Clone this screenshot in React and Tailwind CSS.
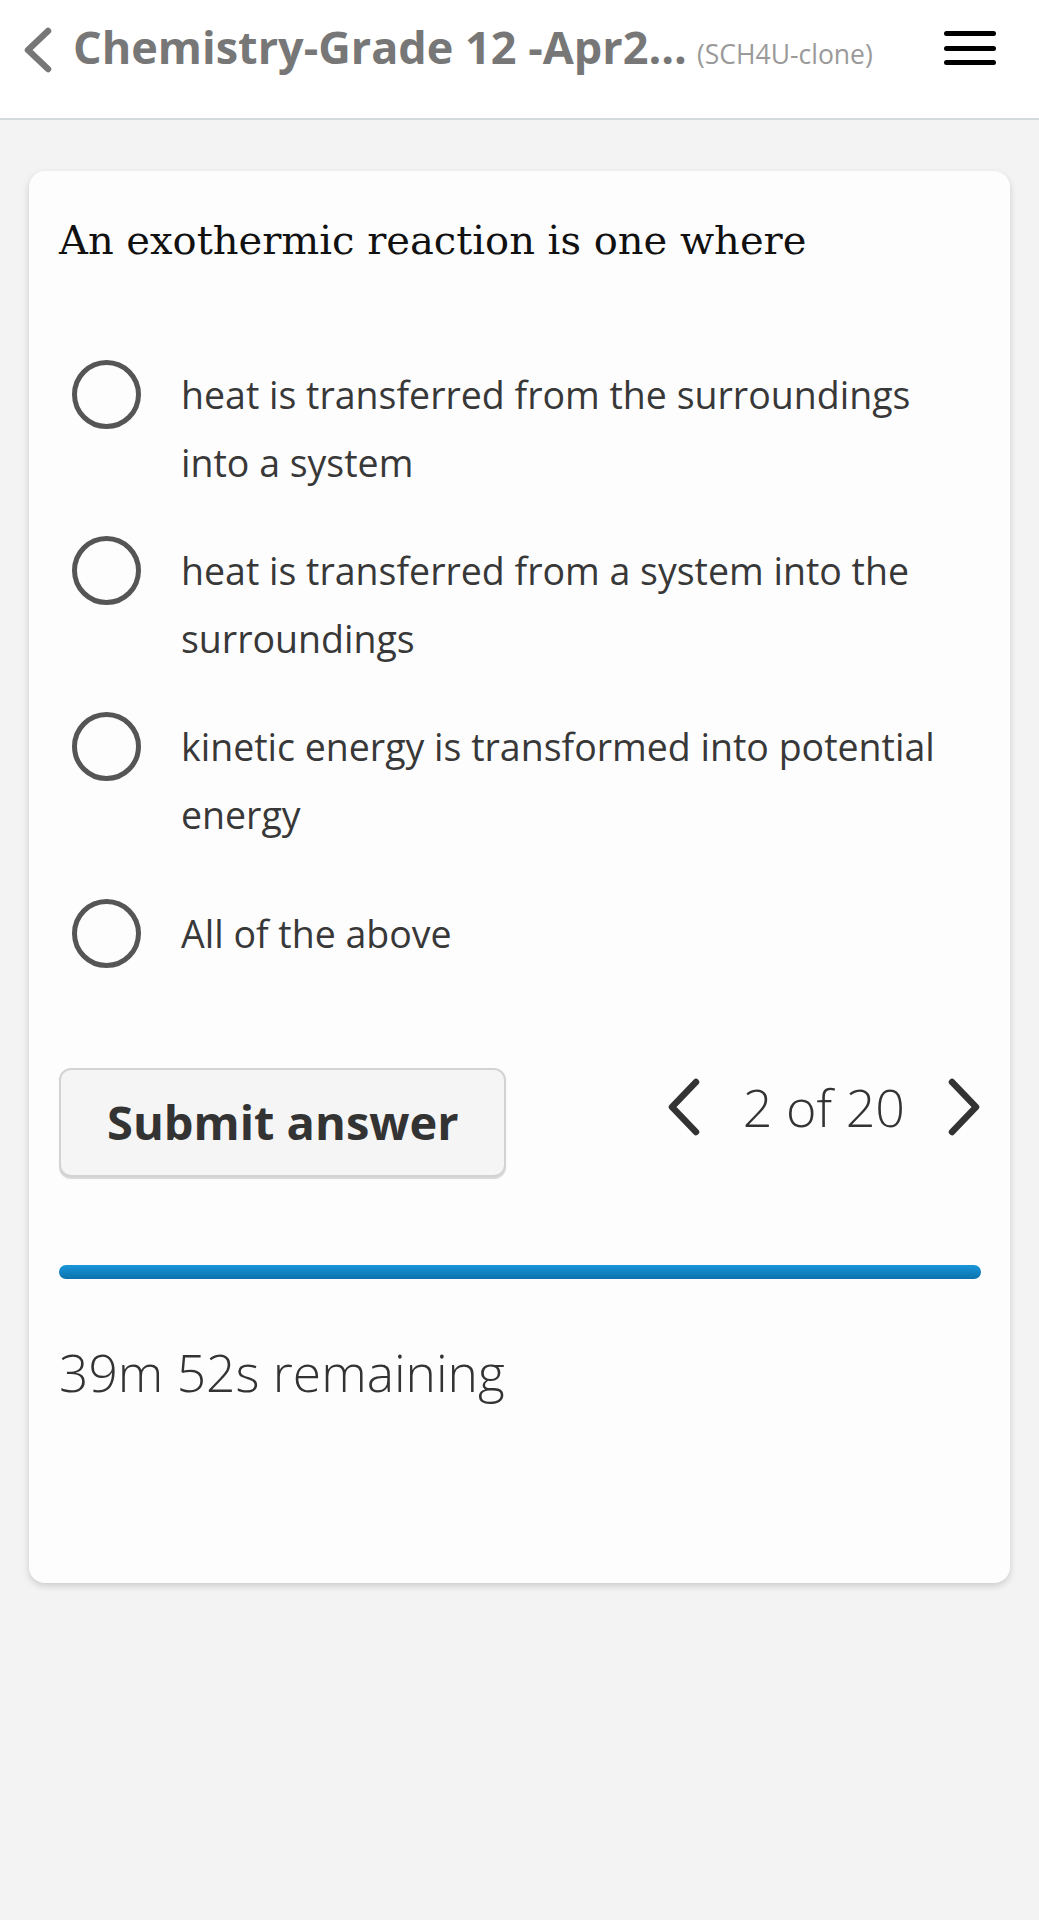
import React from 'react';

const options = [
  'heat is transferred from the surroundings into a system',
  'heat is transferred from a system into the surroundings',
  'kinetic energy is transformed into potential energy',
  'All of the above',
];

function Chevron({ dir = 'left', className = '', color = '#333' }) {
  return (
    <svg viewBox="0 0 34 58" className={className} fill="none">
      {dir === 'left' ? (
        <path d="M29 4 L5 29 L29 54" stroke={color} strokeWidth="6.5" strokeLinecap="round" strokeLinejoin="round" />
      ) : (
        <path d="M5 4 L29 29 L5 54" stroke={color} strokeWidth="6.5" strokeLinecap="round" strokeLinejoin="round" />
      )}
    </svg>
  );
}

export default function App() {
  return (
    <div className="min-h-[1920px] bg-[#f3f3f3]" style={{ fontFamily: '"Open Sans", "Noto Sans", sans-serif' }}>
      <header className="h-[120px] bg-white border-b-[2px] border-[#d5dadc] flex items-start justify-between pl-[23px] pr-[43px]">
        <div className="flex items-start">
          <svg viewBox="0 0 29 46" className="w-[29px] h-[46px] mt-[27px]" fill="none">
            <path d="M25 4 L5 23 L25 42" stroke="#777" strokeWidth="6.5" strokeLinecap="round" strokeLinejoin="round" />
          </svg>
          <div className="flex items-baseline ml-[21px] pt-[17px]">
            <span className="text-[45px] leading-[60px] font-bold text-[#777]">Chemistry-Grade 12 -Apr2...</span>
            <span className="text-[26.5px] text-[#9a9a9a] ml-[10px]">(SCH4U-clone)</span>
          </div>
        </div>
        <div className="flex flex-col gap-[9.5px] mt-[31px]">
          <div className="w-[52px] h-[5px] rounded-full bg-black"></div>
          <div className="w-[52px] h-[5px] rounded-full bg-black"></div>
          <div className="w-[52px] h-[5px] rounded-full bg-black"></div>
        </div>
      </header>

      <main className="px-[29px] pt-[51px]">
        <div className="bg-[#fdfdfd] rounded-[16px] shadow-[0_3px_7px_rgba(0,0,0,0.16)] pl-[30px] pr-[29px] pt-[45px] pb-[177px]">
          <h1 className="text-[40px] leading-[48px] text-[#111]" style={{ fontFamily: '"DejaVu Serif", "Liberation Serif", serif' }}>
            An exothermic reaction is one where
          </h1>

          <div className="mt-[97px] flex flex-col">
            {options.map((o, i) => (
              <label key={o} className={`flex items-start ${i === 0 ? '' : i === 3 ? 'mt-[51px]' : 'mt-[40px]'}`}>
                <span className="w-[69px] h-[69px] rounded-full border-[5px] border-[#555] shrink-0 ml-[13px] mt-[-1px]"></span>
                <span className="ml-[40px] max-w-[765px] text-[37.5px] leading-[68px] text-[#383838]">{o}</span>
              </label>
            ))}
          </div>

          <div className="mt-[100px] flex items-start justify-between">
            <button className="w-[447px] h-[109px] rounded-[12px] bg-[#f5f5f5] border-[2px] border-[#d3d3d3] shadow-[0_2px_1px_rgba(0,0,0,0.15)] text-[47px] font-bold text-[#333] text-left pl-[46px]">
              Submit answer
            </button>
            <div className="flex items-center mt-[9px]">
              <Chevron dir="left" className="w-[34px] h-[58px]" />
              <span className="mx-[42px] text-[52px] leading-[60px] font-light text-[#333]">2 of 20</span>
              <Chevron dir="right" className="w-[34px] h-[58px]" />
            </div>
          </div>

          <div className="mt-[88px] h-[14px] rounded-full bg-gradient-to-b from-[#1996da] to-[#0b72ac]"></div>

          <p className="mt-[59px] text-[51.5px] leading-[68px] font-light text-[#333]">39m 52s remaining</p>
        </div>
      </main>
    </div>
  );
}
